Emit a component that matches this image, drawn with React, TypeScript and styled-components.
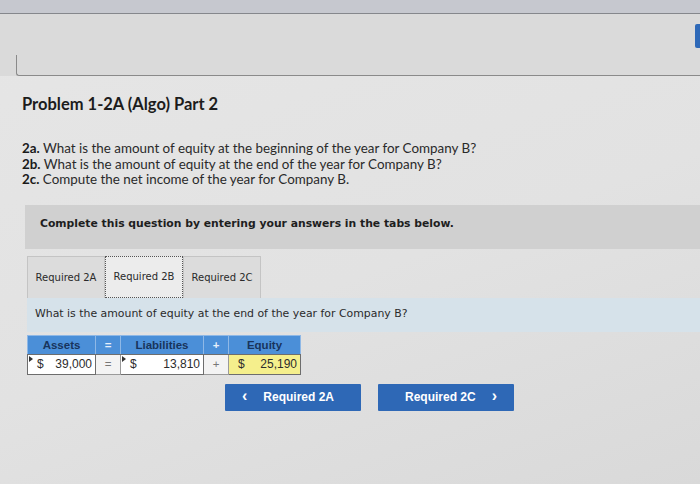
import styled, { createGlobalStyle } from 'styled-components';

const GlobalStyle = createGlobalStyle`
  html, body {
    margin: 0;
    padding: 0;
    background: #e2e2e2;
  }
  * {
    box-sizing: border-box;
  }
`;

const columns = [
  { label: 'Assets', width: 68 },
  { label: '=', width: 25, op: true },
  { label: 'Liabilities', width: 83 },
  { label: '+', width: 25, op: true },
  { label: 'Equity', width: 72 },
];

export default function App() {
  return (
    <Page>
      <GlobalStyle />
      <TopBar />
      <Header>
        <OutlineBox />
        <SideTab />
      </Header>

      <Title>Problem 1-2A (Algo) Part 2</Title>

      <Questions>
        <p>
          <b>2a.</b> What is the amount of equity at the beginning of the year for Company B?
        </p>
        <p>
          <b>2b.</b> What is the amount of equity at the end of the year for Company B?
        </p>
        <p>
          <b>2c.</b> Compute the net income of the year for Company B.
        </p>
      </Questions>

      <Banner>Complete this question by entering your answers in the tabs below.</Banner>

      <Tabs>
        <Tab>Required 2A</Tab>
        <Tab $active>Required 2B</Tab>
        <Tab>Required 2C</Tab>
      </Tabs>

      <Prompt>What is the amount of equity at the end of the year for Company B?</Prompt>

      <Equation>
        <colgroup>
          {columns.map((c) => (
            <col key={c.label} style={{ width: c.width }} />
          ))}
        </colgroup>
        <thead>
          <tr>
            {columns.map((c) => (
              <HeadCell key={c.label} $op={c.op}>
                {c.label}
              </HeadCell>
            ))}
          </tr>
        </thead>
        <tbody>
          <tr>
            <InputCell $marker>
              <Money>
                <span>$</span>
                <span>39,000</span>
              </Money>
            </InputCell>
            <OpCell>=</OpCell>
            <InputCell $marker>
              <Money>
                <span>$</span>
                <span>13,810</span>
              </Money>
            </InputCell>
            <OpCell>+</OpCell>
            <InputCell $result>
              <Money>
                <span>$</span>
                <span>25,190</span>
              </Money>
            </InputCell>
          </tr>
        </tbody>
      </Equation>

      <Nav>
        <NavButton>
          <Chevron>&lsaquo;</Chevron>
          Required 2A
        </NavButton>
        <NavButton $next>
          Required 2C
          <Chevron>&rsaquo;</Chevron>
        </NavButton>
      </Nav>
    </Page>
  );
}

const Page = styled.div`
  width: 700px;
  height: 484px;
  overflow: hidden;
  background: linear-gradient(160deg, #e6e6e6 0%, #e2e2e2 55%, #d9d9d9 100%);
`;

const TopBar = styled.div`
  height: 14px;
  background: #c6c8cf;
  border-bottom: 1px solid #85878c;
`;

const Header = styled.div`
  position: relative;
  height: 62px;
  padding: 41px 0 0 16px;
  background: #dadada;
`;

const OutlineBox = styled.div`
  height: 21px;
  border-left: 1px solid #8a8a8a;
  border-bottom: 1px solid #8a8a8a;
  border-bottom-left-radius: 3px;
`;

const SideTab = styled.div`
  position: absolute;
  right: 0;
  top: 10px;
  width: 5px;
  height: 24px;
  background: #2e69b8;
  border-radius: 2px 0 0 2px;
`;

const Title = styled.h1`
  margin: 18px 0 0 22px;
  font-family: 'Lato', 'Open Sans', sans-serif;
  font-size: 16.5px;
  font-weight: 700;
  color: #1c1c1c;
  line-height: 20px;
`;

const Questions = styled.div`
  margin: 27px 0 0 22px;
  font-family: 'Lato', 'Open Sans', sans-serif;
  font-size: 13.4px;
  color: #2a2a2a;

  p {
    margin: 0;
    line-height: 15.5px;
  }

  b {
    font-weight: 700;
    color: #1a1a1a;
  }
`;

const Banner = styled.div`
  margin: 17px 0 0 25px;
  height: 44px;
  padding: 12px 0 0 15px;
  background: #d0d0d0;
  font-family: 'DejaVu Sans', Verdana, sans-serif;
  font-size: 10.8px;
  font-weight: 700;
  color: #1e1e1e;
`;

const Tabs = styled.div`
  display: flex;
  margin: 7px 0 0 27px;
  height: 42px;
`;

const Tab = styled.div<{ $active?: boolean }>`
  width: 78px;
  display: flex;
  align-items: center;
  justify-content: center;
  font-family: 'DejaVu Sans', sans-serif;
  font-size: 10px;
  color: #2a2a2a;
  background: ${(p) => (p.$active ? '#ececec' : '#dcdcdc')};
  border: ${(p) => (p.$active ? '1px dotted #555' : '1px solid #c4c4c4')};
  border-bottom: ${(p) => (p.$active ? '1px dotted #555' : 'none')};
`;

const Prompt = styled.div`
  margin-left: 27px;
  height: 34px;
  padding: 9px 0 0 8px;
  background: #d6e2ea;
  font-family: 'DejaVu Sans', sans-serif;
  font-size: 10.9px;
  color: #2a2a2a;
`;

const Equation = styled.table`
  margin: 3px 0 0 27px;
  border-collapse: collapse;
  table-layout: fixed;
  width: 273px;
  font-family: 'Liberation Sans', Arial, sans-serif;
  font-size: 11.5px;
  border: 1px solid #6d6d6d;
`;

const HeadCell = styled.th<{ $op?: boolean }>`
  height: 19px;
  padding: 0;
  background: #4b8fd8;
  border: 1px solid #8fb8e6;
  border-bottom-color: #6d6d6d;
  color: ${(p) => (p.$op ? '#e6eefa' : '#18345c')};
  font-weight: 700;
  text-align: center;
`;

const InputCell = styled.td<{ $marker?: boolean; $result?: boolean }>`
  position: relative;
  height: 20px;
  padding: 0 3px 0 9px;
  background: ${(p) => (p.$result ? '#f5ef8c' : '#ffffff')};
  border: 1px solid #6d6d6d;
  color: #2c2c2c;

  &::before {
    content: '';
    display: ${(p) => (p.$marker ? 'block' : 'none')};
    position: absolute;
    left: 1px;
    top: 1px;
    border-top: 3px solid transparent;
    border-bottom: 3px solid transparent;
    border-left: 4px solid #333;
  }
`;

const Money = styled.div`
  display: flex;
  justify-content: space-between;
  font-size: 12px;
`;

const OpCell = styled.td`
  height: 20px;
  padding: 0;
  text-align: center;
  background: #f3f3f3;
  border: 1px solid #9a9a9a;
  color: #777;
`;

const Nav = styled.div`
  display: flex;
  gap: 17px;
  margin: 9px 0 0 225px;
`;

const NavButton = styled.button<{ $next?: boolean }>`
  width: 136px;
  height: 27px;
  display: flex;
  align-items: center;
  justify-content: center;
  gap: 16px;
  padding: ${(p) => (p.$next ? '0 0 0 10px' : '0 10px 0 0')};
  border: none;
  border-radius: 1px;
  background: #2e68b6;
  color: #ffffff;
  font-family: 'Liberation Sans', Arial, sans-serif;
  font-size: 12px;
  font-weight: 700;
`;

const Chevron = styled.span`
  font-size: 16px;
  line-height: 1;
  margin-top: -2px;
`;
